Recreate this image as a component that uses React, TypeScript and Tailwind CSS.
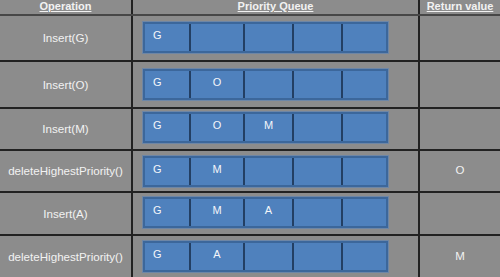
type Row = {
  op: string;
  queue: string[];
  ret: string;
  h: string;
  pt: string;
};

const rows: Row[] = [
  { op: "Insert(G)", queue: ["G"], ret: "", h: "h-[46px]", pt: "pt-[6px]" },
  { op: "Insert(O)", queue: ["G", "O"], ret: "", h: "h-[47px]", pt: "pt-[7px]" },
  { op: "Insert(M)", queue: ["G", "O", "M"], ret: "", h: "h-[42px]", pt: "pt-[3px]" },
  { op: "deleteHighestPriority()", queue: ["G", "M"], ret: "O", h: "h-[42px]", pt: "pt-[5px]" },
  { op: "Insert(A)", queue: ["G", "M", "A"], ret: "", h: "h-[43px]", pt: "pt-[4px]" },
  { op: "deleteHighestPriority()", queue: ["G", "A"], ret: "M", h: "h-[41px]", pt: "pt-[5px]" },
];

const cellWidths = ["w-[44px]", "w-[54px]", "w-[49px]", "w-[49px]", "w-[49px]"];

function Queue({ items }: { items: string[] }) {
  return (
    <div className="ml-[10px] flex h-[31px] w-[245px] border-2 border-[#3c679b] bg-[#4f81bd] shadow-[0_0_0_1px_#6d86a6]">
      {cellWidths.map((w, i) => (
        <div
          key={i}
          className={`${w} flex shrink-0 pt-[3px] text-[11px] text-[#f4f6fa] ${
            i > 0 ? "border-l-2 border-[#233f63] justify-center" : "pl-[8px]"
          } ${i === 4 ? "grow" : ""}`}
        >
          {items[i] ?? ""}
        </div>
      ))}
    </div>
  );
}

export default function App() {
  return (
    <div
      className="h-[277px] w-[500px] overflow-hidden bg-[#8c8c8c] text-[#f2f2f2]"
      style={{ fontFamily: '"Liberation Sans", Arial, sans-serif' }}
    >
      <div className="grid h-[16px] grid-cols-[133px_287px_80px] border-b-2 border-[#474747] text-[11px] font-bold leading-[13px]">
        <div className="border-r-2 border-[#222] text-center underline">Operation</div>
        <div className="border-r-2 border-[#222] text-center underline">Priority Queue</div>
        <div className="text-center underline">Return value</div>
      </div>
      {rows.map((r, i) => (
        <div
          key={i}
          className={`grid ${r.h} grid-cols-[133px_287px_80px] ${
            i < rows.length - 1 ? "border-b-2 border-[#222]" : ""
          }`}
        >
          <div className="flex items-center justify-center border-r-2 border-[#222] text-[11.6px]">
            {r.op}
          </div>
          <div className={`border-r-2 border-[#222] ${r.pt}`}>
            <Queue items={r.queue} />
          </div>
          <div className="flex items-center justify-center text-[11.5px]">{r.ret}</div>
        </div>
      ))}
    </div>
  );
}
